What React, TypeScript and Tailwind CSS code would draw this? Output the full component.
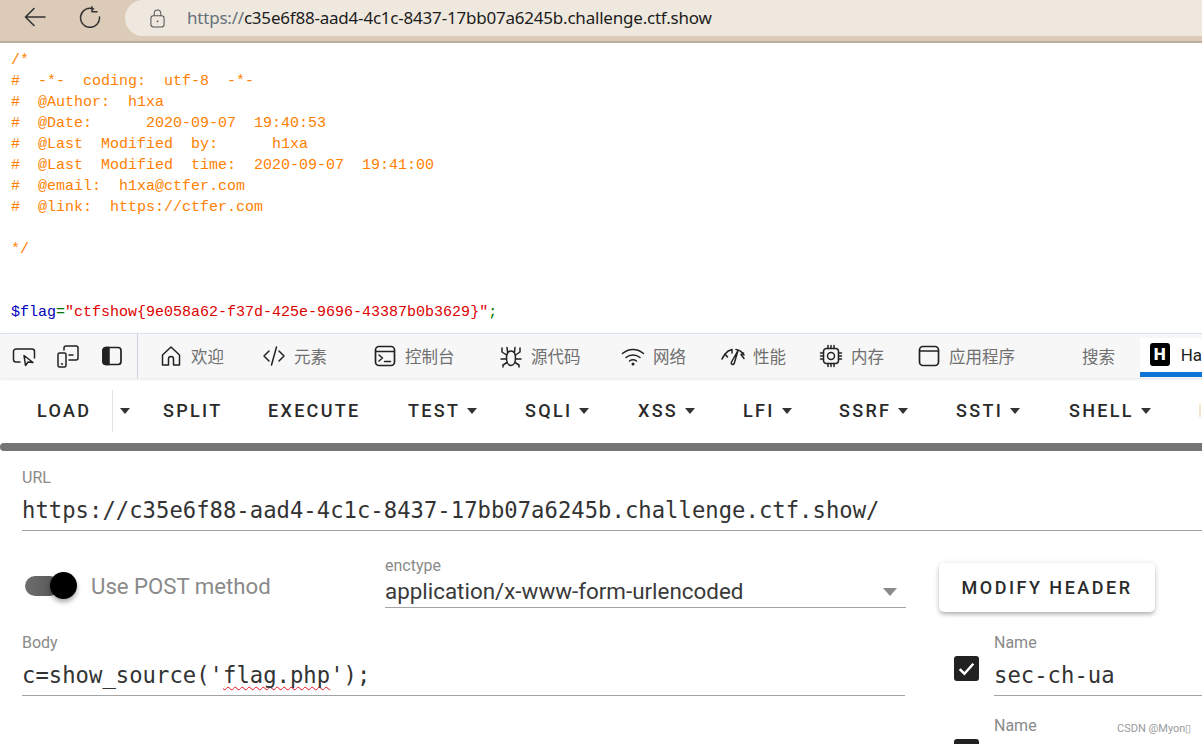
import React from "react";

const code = `/*
#  -*-  coding:  utf-8  -*-
#  @Author:  h1xa
#  @Date:      2020-09-07  19:40:53
#  @Last  Modified  by:      h1xa
#  @Last  Modified  time:  2020-09-07  19:41:00
#  @email:  h1xa@ctfer.com
#  @link:  https://ctfer.com

*/`;

const Ico = ({ children, className = "" }: { children: React.ReactNode; className?: string }) => (
  <svg
    viewBox="0 0 24 24"
    fill="none"
    stroke="#222"
    strokeWidth="1.5"
    strokeLinecap="round"
    strokeLinejoin="round"
    className={"h-6 w-6 shrink-0 " + className}
  >
    {children}
  </svg>
);

const tabs = [
  {
    label: "欢迎",
    w: "w-[103px]",
    icon: <path d="M3.500 21v-10L12 3l8.500 8v10h-6v-6a2.500 2.500 0 0 0-5 0v6z" />,
  },
  {
    label: "元素",
    w: "w-[111px]",
    icon: <path d="M7 7l-5 5 5 5M17 7l5 5-5 5M14.500 3l-5 18" />,
  },
  {
    label: "控制台",
    w: "w-[126px]",
    icon: (
      <>
        <rect x="2.500" y="2.500" width="19" height="19" rx="3.500" strokeWidth="1.700" />
        <path d="M3 7.500h18M6 11l3.500 3L6 17M11.500 17.500h6" />
      </>
    ),
  },
  {
    label: "源代码",
    w: "w-[122px]",
    icon: (
      <>
        <path d="M12 7c3.200 0 4.500 3 4.500 7s-1.700 7.500-4.500 7.500S7.500 18 7.500 14s1.300-7 4.500-7z" />
        <path d="M7.500 11 3 8V4M16.500 11 21 8V4M7.500 15H2M16.500 15H22M8 18.500 4 21v2M16 18.500l4 2.500v2M8.500 8 8 3.500M15.500 8l.5-4.500" />
      </>
    ),
  },
  {
    label: "网络",
    w: "w-[100px]",
    icon: (
      <>
        <path d="M1.500 9.500c6-5.500 15-5.500 21 0M5 13.500c4-3.500 10-3.500 14 0M8.500 17c2-1.500 5-1.500 7 0" />
        <circle cx="12" cy="20" r="1.500" fill="#222" stroke="none" />
      </>
    ),
  },
  {
    label: "性能",
    w: "w-[98px]",
    icon: (
      <>
        <path d="M1 15l3-5 2.500 3M4 10c2-2.500 4.500-4 7-4.500M11 5.500v3.500M15 5.500c3.500.5 6 2.500 8 5.500M20.500 10.500l2-1.500M20 10.500l3 4" />
        <path d="M17 6.500l-6.500 11.500c-1 2 1.500 3.500 2.700 1.500L17 6.500z" />
      </>
    ),
  },
  {
    label: "内存",
    w: "w-[98px]",
    icon: (
      <>
        <rect x="4.500" y="4.500" width="15" height="15" rx="3" />
        <circle cx="12" cy="12" r="3.500" />
        <path d="M9 1.500v3M12 1.500v3M15 1.500v3M9 19.500v3M12 19.500v3M15 19.500v3M1.500 9h3M1.500 12h3M1.500 15h3M19.500 9h3M19.500 12h3M19.500 15h3" />
      </>
    ),
  },
];

const tools = [
  { label: "LOAD", w: "w-[126px]" },
  { label: "SPLIT", w: "w-[105px]" },
  { label: "EXECUTE", w: "w-[140px]" },
  { label: "TEST", w: "w-[117px]", caret: true },
  { label: "SQLI", w: "w-[113px]", caret: true },
  { label: "XSS", w: "w-[105px]", caret: true },
  { label: "LFI", w: "w-[96px]", caret: true },
  { label: "SSRF", w: "w-[117px]", caret: true },
  { label: "SSTI", w: "w-[113px]", caret: true },
  { label: "SHELL", w: "w-[130px]", caret: true },
];

const Caret = () => (
  <span className="inline-block h-0 w-0 border-x-[5.500px] border-t-[6px] border-x-transparent border-t-[#333]" />
);

const monoInput = "font-['DejaVu_Sans_Mono',monospace] text-[22.200px] leading-[34px] tracking-[0.040px] text-[#333]";
const label = "text-[16px] leading-5 text-[#8a8a8a]";

export default function App() {
  return (
    <div className="relative h-[744px] w-[1202px] overflow-hidden bg-white font-['Roboto',sans-serif]">
      {/* browser bar */}
      <div className="flex h-[43px] border-b-2 border-[#bcae9e] bg-[#dccbb8] pl-6">
        <svg viewBox="0 0 22 20" className="mt-[7px] h-5 w-[22px]" fill="none" stroke="#333" strokeWidth="1.600" strokeLinecap="round" strokeLinejoin="round">
          <path d="M21 10H1.500M10 1.500 1.500 10l8.500 8.500" />
        </svg>
        <svg viewBox="0 0 22 22" className="ml-[33px] mt-[6px] h-[22px] w-[22px]" fill="none" stroke="#333" strokeWidth="1.500" strokeLinecap="round" strokeLinejoin="round">
          <path d="M14.500 3A9.500 9.500 0 1 0 20.500 11M13 0.800v5h5" />
        </svg>
        <div className="ml-[24px] flex h-[36px] flex-1 items-center rounded-l-[18px] bg-[#efe8de] pl-[25px]">
          <svg viewBox="0 0 16 20" className="h-[19px] w-[15px]" fill="none" stroke="#555" strokeWidth="1.100">
            <rect x="1" y="7" width="14" height="12" rx="2.500" />
            <path d="M4.500 7V4.500a3.500 3.500 0 0 1 7 0V7" />
            <circle cx="8" cy="13" r="1" fill="#555" stroke="none" />
          </svg>
          <span className="ml-[22px] font-['Noto_Sans',sans-serif] text-[17px] tracking-[-0.210px] text-[#1c1c1c]">
            <span className="text-[#66717a]">https://</span>c35e6f88-aad4-4c1c-8437-17bb07a6245b.challenge.ctf.show
          </span>
        </div>
      </div>

      {/* highlighted php source */}
      <pre className="h-[290px] whitespace-pre pl-[11px] pt-[6.500px] font-['Liberation_Mono',monospace] text-[15px] leading-[21px] text-[#ff8000]">
        {code}
        {"\n\n\n"}
        <span className="text-[#0000bb]">$flag</span>
        <span className="text-[#007700]">=</span>
        <span className="text-[#dd0000]">"ctfshow{"{"}9e058a62-f37d-425e-9696-43387b0b3629{"}"}"</span>
        <span className="text-[#007700]">;</span>
      </pre>

      {/* devtools tabs */}
      <div className="flex h-[45px] border-t border-[#d8e2f0] bg-[#f7f7f7] shadow-[0_1px_3px_rgba(0,0,0,0.12)]">
        <div className="flex h-full w-[138px] items-center gap-5 border-r border-[#ccd0dc] pl-3">
          <Ico>
            <path d="M8 18H4a2.500 2.500 0 0 1-2.500-2.500v-8A2.500 2.500 0 0 1 4 5h16a2.500 2.500 0 0 1 2.500 2.500V14M12 11.500l1.500 10 2.500-3.500 5 .5z" />
          </Ico>
          <Ico>
            <rect x="2" y="9" width="8" height="14" rx="1.500" />
            <path d="M8 6V4a2 2 0 0 1 2-2h10a2 2 0 0 1 2 2v10a2 2 0 0 1-2 2h-7M13 11h4M5.500 20h1" />
          </Ico>
          <Ico>
            <rect x="3" y="3.500" width="18" height="17" rx="3" strokeWidth="1.700" />
            <path d="M6 3.500h3v17H6a3 3 0 0 1-3-3v-11a3 3 0 0 1 3-3z" fill="#222" />
          </Ico>
        </div>
        <div className="flex pl-[21px]">
          {tabs.map((t) => (
            <div key={t.label} className={"flex items-center gap-2 " + t.w}>
              <Ico>{t.icon}</Ico>
              <span className="font-['Noto_Sans_CJK_SC',sans-serif] text-[16.500px] text-[#707070]">{t.label}</span>
            </div>
          ))}
          <div className="flex w-[165px] items-center gap-2">
            <Ico>
              <rect x="2.500" y="2.500" width="19" height="19" rx="3.500" strokeWidth="1.700" />
              <path d="M3 7h18" />
            </Ico>
            <span className="font-['Noto_Sans_CJK_SC',sans-serif] text-[16.500px] text-[#707070]">应用程序</span>
          </div>
          <div className="flex w-[58px] items-center">
            <span className="font-['Noto_Sans_CJK_SC',sans-serif] text-[16.500px] text-[#707070]">搜索</span>
          </div>
          <div className="mt-[4px] flex h-[39px] w-[62px] items-start gap-[11px] rounded-t-[2px] border-b-[5px] border-[#0c75d6] bg-white pl-[10px] pt-[5px]">
            <span className="flex h-[23px] w-[23px] items-center justify-center rounded-[3px] bg-black text-[17px] font-black text-white">
              H
            </span>
            <span className="text-[17px] leading-6 text-[#222]">Ha</span>
          </div>
        </div>
      </div>

      {/* hackbar toolbar */}
      <div className="flex h-[65px] items-center pl-[37px]">
        {tools.map((t) => (
          <div key={t.label} className={"flex shrink-0 items-center gap-[7px] " + t.w}>
            <span className="text-[18px] font-medium leading-6 tracking-[2.300px] text-[#2a2a2a]">{t.label}</span>
            {t.caret && <Caret />}
            {t.label === "LOAD" && (
              <span className="ml-[14px] flex h-[42px] items-center border-l border-[#e2e2e2] pl-[7px]">
                <Caret />
              </span>
            )}
          </div>
        ))}
        <span className="h-[13px] w-[2px] bg-[#f3e5d0]" />
      </div>
      <div className="h-2 rounded-l-[4px] bg-[#757575]" />

      {/* form */}
      <div className="pl-[22px] pt-[17px]">
        <div className={label}>URL</div>
        <div className={"mt-[5px] h-[38px] border-b border-[#a5a5a5] " + monoInput}>
          https://c35e6f88-aad4-4c1c-8437-17bb07a6245b.challenge.ctf.show/
        </div>

        <div className="mt-[25px] flex h-[52px]">
          <div className="flex w-[363px] items-start pt-[20px]">
            <div className="relative ml-[3px] h-[20px] w-[35px] rounded-full bg-gradient-to-r from-[#6e6e6e] to-[#555]">
              <span className="absolute -top-[4px] left-[25px] h-[27px] w-[27px] rounded-full bg-black shadow-[0_3px_5px_rgba(0,0,0,0.35)]" />
            </div>
            <span className="ml-[31px] -mt-[3px] text-[22.200px] leading-[26px] text-[#8a8a8a]">Use POST method</span>
          </div>
          <div className="w-[521px] border-b border-[#a5a5a5]">
            <div className={label}>enctype</div>
            <div className="flex items-center justify-between pr-[9px]">
              <span className="text-[22.400px] leading-[31px] text-[#3a3a3a]">application/x-www-form-urlencoded</span>
              <span className="h-0 w-0 border-x-[7px] border-t-[8px] border-x-transparent border-t-[#8a8a8a]" />
            </div>
          </div>
          <div className="ml-[33px] mt-[7px] flex h-[49px] w-[216px] items-center justify-center rounded-[5px] bg-white text-[18px] font-medium tracking-[2.500px] text-[#2a2a2a] shadow-[0_3px_4px_-1px_rgba(0,0,0,0.25),0_1px_6px_rgba(0,0,0,0.14)]">
            MODIFY HEADER
          </div>
        </div>

        <div className="mt-[25px] flex">
          <div className="h-[63px] w-[883px] border-b border-[#a5a5a5]">
            <div className={label}>Body</div>
            <div className={"mt-[5px] " + monoInput}>
              c=show_source('
              <span className="underline decoration-[#e81123] decoration-wavy decoration-1 underline-offset-[3px] [text-decoration-skip-ink:none]">flag.php</span>
              ');
            </div>
          </div>
          <div className="ml-[49px] flex-1">
            <div className="flex">
              <span className="mt-[23px] flex h-[25px] w-[25px] items-center justify-center rounded-[3px] bg-[#212121]">
                <svg viewBox="0 0 20 20" className="h-[21px] w-[21px]" fill="none" stroke="#fff" strokeWidth="2.400">
                  <path d="M3.500 10.500 8 15l8.500-9.500" />
                </svg>
              </span>
              <div className="ml-[15px] h-[63px] flex-1 border-b border-[#a5a5a5]">
                <div className={label}>Name</div>
                <div className={"mt-[5px] " + monoInput}>sec-ch-ua</div>
              </div>
            </div>
            <div className="mt-[20px] flex">
              <span className="mt-[23px] h-[25px] w-[25px] rounded-[3px] bg-[#212121]" />
              <div className="ml-[15px] flex-1">
                <div className={label}>Name</div>
              </div>
            </div>
          </div>
        </div>
      </div>

      <span className="absolute left-[1117px] top-[722px] text-[11px] leading-[14px] text-[#9a9a9a]">CSDN @Myon▯</span>
    </div>
  );
}
